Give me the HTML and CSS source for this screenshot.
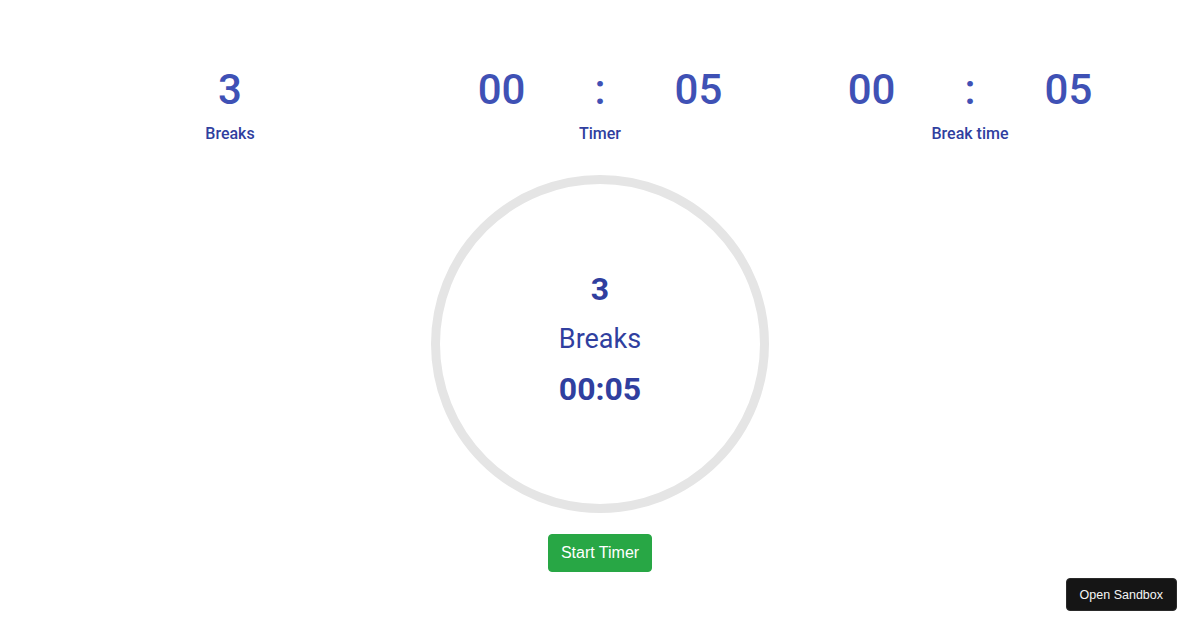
FILE: index.html
```html
<!DOCTYPE html>
<html lang="en">
<head>
<meta charset="utf-8">
<title>Pomodoro Timer</title>
<link rel="stylesheet" href="styles.css">
</head>
<body>
<div class="container">
  <div class="stats">
    <div class="stat">
      <div class="digits"><span class="num">3</span></div>
      <div class="label">Breaks</div>
    </div>
    <div class="stat">
      <div class="digits"><span class="num">00</span><span class="num">:</span><span class="num">05</span></div>
      <div class="label">Timer</div>
    </div>
    <div class="stat">
      <div class="digits"><span class="num">00</span><span class="num">:</span><span class="num">05</span></div>
      <div class="label">Break time</div>
    </div>
  </div>

  <div class="dial-wrap">
    <div class="dial">
      <div class="dial-count">3</div>
      <div class="dial-label">Breaks</div>
      <div class="dial-time">00:05</div>
    </div>
  </div>

  <div class="actions">
    <button class="btn-start" type="button">Start Timer</button>
  </div>
</div>

<a class="sandbox-btn" href="#">Open Sandbox</a>
</body>
</html>
```

FILE: styles.css
```css
* {
  box-sizing: border-box;
}

html, body {
  margin: 0;
  padding: 0;
  background: #ffffff;
}

body {
  font-family: Roboto, "Noto Sans", "Liberation Sans", sans-serif;
  color: #303f9f;
}

.container {
  width: 1140px;
  margin: 0 auto;
  padding: 0 15px;
}

.stats {
  display: grid;
  grid-template-columns: repeat(3, 1fr);
  padding-top: 63px;
}

.stat {
  padding: 0 15px;
  text-align: center;
}

.digits {
  display: flex;
  justify-content: center;
  gap: 69px;
  font-size: 42px;
  font-weight: 500;
  line-height: 53px;
  color: #3f51b5;
}

.label {
  margin-top: 6px;
  font-size: 16px;
  font-weight: 500;
  line-height: 24px;
  color: #303f9f;
}

.dial-wrap {
  display: flex;
  justify-content: center;
  padding-top: 29px;
}

.dial {
  width: 338px;
  height: 338px;
  border: 9px solid #e5e5e5;
  border-radius: 50%;
  display: flex;
  flex-direction: column;
  align-items: center;
  justify-content: center;
  padding-bottom: 10px;
  color: #303f9f;
}

.dial-count,
.dial-time {
  font-size: 32px;
  font-weight: 700;
  line-height: 50px;
}

.dial-label {
  font-size: 27px;
  font-weight: 400;
  line-height: 50px;
}

.actions {
  display: flex;
  justify-content: center;
  padding-top: 21px;
}

.btn-start {
  font-family: "Liberation Sans", Arial, sans-serif;
  font-size: 16px;
  line-height: 24px;
  padding: 6px 12px;
  color: #ffffff;
  background: #28a745;
  border: 1px solid #28a745;
  border-radius: 4px;
  cursor: pointer;
}

.sandbox-btn {
  position: fixed;
  right: 23px;
  bottom: 19px;
  height: 33px;
  padding: 0 13px;
  display: flex;
  align-items: center;
  font-family: "Liberation Sans", Arial, sans-serif;
  font-size: 12.5px;
  color: #f5f5f5;
  background: #151515;
  border: 1px solid #2a2a2a;
  border-radius: 4px;
  text-decoration: none;
}
```
